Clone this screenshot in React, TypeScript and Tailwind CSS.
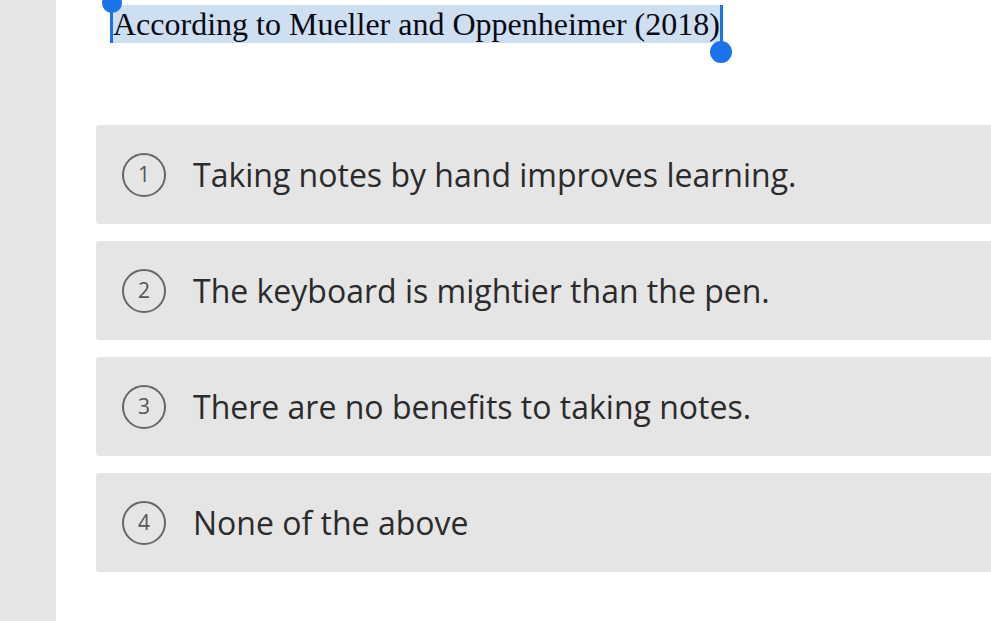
const options = [
  'Taking notes by hand improves learning.',
  'The keyboard is mightier than the pen.',
  'There are no benefits to taking notes.',
  'None of the above',
];

export default function App() {
  return (
    <div className="flex h-[621px] w-[991px] overflow-hidden bg-white">
      <aside className="w-[56px] shrink-0 bg-[#e5e5e5]" />
      <main className="min-w-0 flex-1 pl-[40px]">
        {/* selected question text */}
        <div className="relative ml-[17px] mt-[5px] inline-block whitespace-nowrap bg-[#cddff0] pr-[3px] font-['Liberation_Serif',serif] text-[32px] leading-[38px] text-[#0a0a14]">
          According to Mueller and Oppenheimer (2018)
          <span className="absolute left-[-3px] top-0 h-full w-[3px] bg-[#1a73e8]" />
          <span className="absolute left-[-11px] top-[-12px] h-[20px] w-[20px] rounded-full bg-[#1a73e8]" />
          <span className="absolute right-0 top-0 h-[40px] w-[3px] bg-[#1a73e8]" />
          <span className="absolute right-[-9px] top-[36px] h-[22px] w-[22px] rounded-full bg-[#1a73e8]" />
        </div>

        <ul className="mr-[-20px] mt-[82px] flex flex-col gap-[17px]">
          {options.map((text, i) => (
            <li
              key={i}
              className="flex h-[99px] items-center rounded-[3px] bg-[#e5e5e5] pl-[26px] font-['Open_Sans',sans-serif] text-[#2b2b2b]"
            >
              <span className="flex h-[44px] w-[44px] shrink-0 items-center justify-center rounded-full border-2 border-[#666] text-[21px] text-[#555]">
                {i + 1}
              </span>
              <span className="ml-[27px] whitespace-nowrap text-[32px]">{text}</span>
            </li>
          ))}
        </ul>
      </main>
    </div>
  );
}
